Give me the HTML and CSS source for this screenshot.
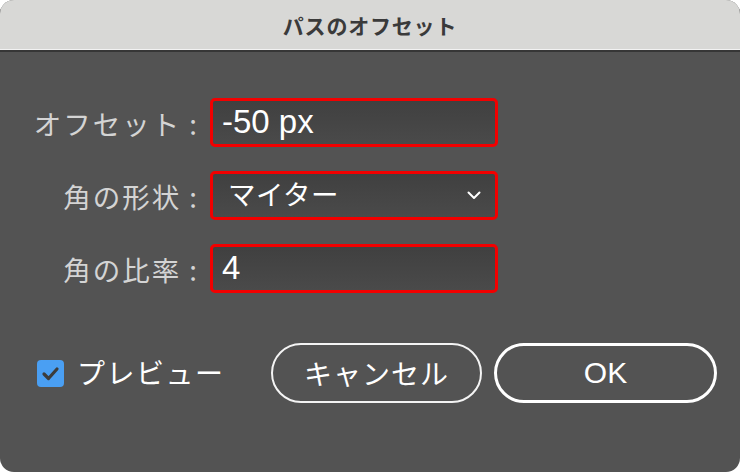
FILE: index.html
```html
<!DOCTYPE html>
<html lang="ja">
<head>
<meta charset="utf-8">
<link rel="stylesheet" href="styles.css">
</head>
<body>
<div class="window">
  <div class="titlebar">パスのオフセット</div>
  <div class="content">
    <div class="form">
      <div class="label">オフセット :</div>
      <div class="field"><span class="value">-50 px</span></div>
      <div class="label">角の形状 :</div>
      <div class="field select"><span class="value jp">マイター</span>
        <svg class="chev" width="14" height="9" viewBox="0 0 14 9"><path d="M1.5 1.5 L7 7 L12.5 1.5" fill="none" stroke="#fff" stroke-width="2" stroke-linecap="round" stroke-linejoin="round"/></svg>
      </div>
      <div class="label">角の比率 :</div>
      <div class="field"><span class="value">4</span></div>
    </div>
    <div class="footer">
      <label class="check">
        <span class="box"><svg width="27" height="27" viewBox="0 0 27 27"><path d="M7 14 L11.5 18.5 L20 9" fill="none" stroke="#3c3c3c" stroke-width="3.2" stroke-linecap="round" stroke-linejoin="round"/></svg></span>
        <span class="check-text">プレビュー</span>
      </label>
      <div class="buttons">
        <button class="btn cancel">キャンセル</button>
        <button class="btn ok">OK</button>
      </div>
    </div>
  </div>
</div>
</body>
</html>
```
FILE: styles.css
```css
html, body {
  margin: 0;
  padding: 0;
  background: #ffffff;
}
body {
  width: 740px;
  height: 472px;
  overflow: hidden;
  font-family: "Liberation Sans", "Noto Sans CJK JP", sans-serif;
}
.window {
  width: 740px;
  height: 472px;
  border-radius: 14px;
  overflow: hidden;
  background: #535353;
  display: flex;
  flex-direction: column;
}
.titlebar {
  height: 50px;
  flex: none;
  background: #d8d8d6;
  border-bottom: 1px solid #f2f2f2;
  box-shadow: 0 2px 0 #363636;
  display: flex;
  align-items: center;
  justify-content: center;
  font-family: "Noto Sans CJK JP", sans-serif;
  font-weight: 700;
  font-size: 21px;
  color: #3a3a3a;
  letter-spacing: 0.8px;
  padding-top: 1px;
  box-sizing: border-box;
  position: relative;
  z-index: 1;
}
.content {
  flex: 1;
  padding: 48px 0 0 0;
  display: flex;
  flex-direction: column;
}
.form {
  display: grid;
  grid-template-columns: 210px 288px;
  grid-auto-rows: 49px;
  row-gap: 24px;
  align-items: center;
}
.label {
  text-align: right;
  padding-right: 11px;
  font-family: "Noto Sans CJK JP", sans-serif;
  font-size: 27.5px;
  letter-spacing: 2px;
  color: #d4d4d4;
  white-space: nowrap;
}
.field {
  height: 49px;
  box-sizing: border-box;
  border: 3px solid #f20000;
  border-radius: 5px;
  background: linear-gradient(#404040, #4a4a4a);
  display: flex;
  align-items: center;
  padding: 0 12px 0 9px;
  color: #ffffff;
}
.value {
  font-family: "Liberation Sans", "Noto Sans CJK JP", sans-serif;
  font-size: 33px;
  line-height: 1;
  margin-top: -3px;
}
.value.jp {
  font-family: "Noto Sans CJK JP", sans-serif;
  font-size: 27.5px;
  margin-left: 6px;
  letter-spacing: 0.5px;
}
.select {
  justify-content: space-between;
}
.chev {
  margin-right: 2px;
}
.footer {
  margin-top: 50px;
  display: flex;
  align-items: center;
  padding-left: 37px;
}
.check {
  display: flex;
  align-items: center;
  gap: 13px;
  width: 234px;
}
.box {
  width: 27px;
  height: 27px;
  border-radius: 4px;
  background: #4a9ff3;
  display: block;
  flex: none;
}
.box svg {
  display: block;
}
.check-text {
  font-family: "Noto Sans CJK JP", sans-serif;
  font-size: 28px;
  color: #ffffff;
  letter-spacing: 1.5px;
  margin-top: -3px;
}
.buttons {
  display: flex;
  gap: 12px;
}
.btn {
  height: 60px;
  border-radius: 30px;
  background: transparent;
  color: #ffffff;
  padding: 0;
  margin: 0;
  display: flex;
  align-items: center;
  justify-content: center;
  box-sizing: border-box;
}
.cancel {
  width: 211px;
  border: 2px solid #f4f4f4;
  font-family: "Noto Sans CJK JP", sans-serif;
  font-size: 28px;
  letter-spacing: 1px;
}
.ok {
  width: 223px;
  border: 3.5px solid #ffffff;
  font-family: "Liberation Sans", sans-serif;
  font-size: 30px;
}
```
